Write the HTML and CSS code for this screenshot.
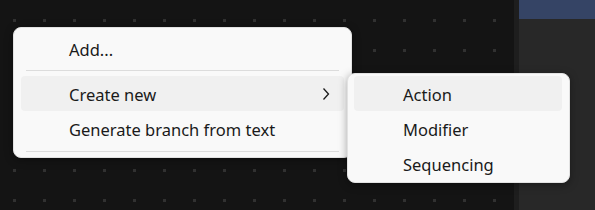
FILE: index.html
```html
<!DOCTYPE html>
<html>
<head>
<meta charset="utf-8">
<link rel="stylesheet" href="styles.css">
</head>
<body>
<div class="app">
  <div class="canvas">
    <div class="menu main-menu">
      <div class="item"><span class="label">Add...</span></div>
      <div class="sep"></div>
      <div class="item active"><span class="label">Create new</span>
        <svg class="chev" width="8" height="14" viewBox="0 0 8 14"><polyline points="1.5,1.5 6.5,7 1.5,12.5" fill="none" stroke="#1a1a1a" stroke-width="1.3"/></svg>
      </div>
      <div class="item"><span class="label">Generate branch from text</span></div>
      <div class="sep last"></div>
    </div>
    <div class="menu sub-menu">
      <div class="item active"><span class="label">Action</span></div>
      <div class="item"><span class="label">Modifier</span></div>
      <div class="item"><span class="label">Sequencing</span></div>
    </div>
  </div>
  <div class="side">
    <div class="side-bar"></div>
  </div>
</div>
</body>
</html>
```

FILE: styles.css
```css
html, body {
  margin: 0;
  padding: 0;
  width: 595px;
  height: 210px;
  overflow: hidden;
  font-family: "Noto Sans", "Open Sans", sans-serif;
}
.app {
  display: flex;
  width: 595px;
  height: 210px;
}
.canvas {
  position: relative;
  width: 514px;
  height: 210px;
  background-color: #141414;
  background-image: conic-gradient(at 3px 3px, transparent 75%, #313131 0);
  background-size: 30px 30px;
  background-position: 13px 19px;
}
.side {
  flex: 1;
  display: flex;
  flex-direction: column;
  background: #282828;
  border-left: 5px solid #1e1e1e;
}
.side-bar {
  height: 19px;
  background: #354465;
}
.menu {
  position: absolute;
  box-sizing: border-box;
  background: #f9f9f9;
  border: 1px solid #e2e2e2;
  border-radius: 8px;
  box-shadow: 0 2px 8px rgba(0, 0, 0, 0.35);
  display: flex;
  flex-direction: column;
}
.main-menu {
  left: 13px;
  top: 27px;
  width: 339px;
  height: 131px;
  padding: 3px 7px 6px;
}
.sub-menu {
  left: 347px;
  top: 73px;
  width: 223px;
  height: 110px;
  padding: 2px 7px 1px 6px;
}
.item {
  box-sizing: border-box;
  height: 35px;
  flex: none;
  display: flex;
  align-items: center;
  border-radius: 4px;
  color: #1a1a1a;
  font-size: 16.5px;
  padding-left: 48px;
  padding-top: 2px;
}
.sub-menu .item {
  padding-left: 49px;
}
.item.active {
  background: #f0f0f0;
}
.label {
  flex: 1;
}
.chev {
  margin-right: 14px;
  margin-top: -2px;
}
.sep {
  height: 1px;
  background: #dcdcdc;
  margin: 4px 5px 5px;
  flex: none;
}
.sep.last {
  margin-top: 5px;
}
```
